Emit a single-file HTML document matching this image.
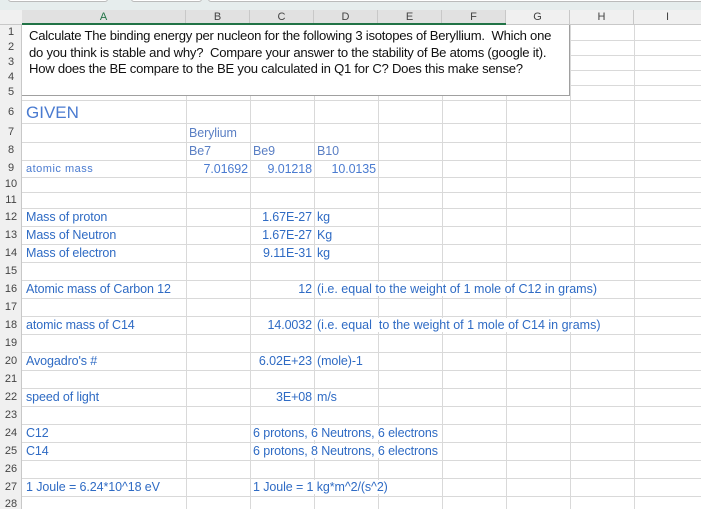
<!DOCTYPE html>
<html><head><meta charset="utf-8"><style>
*{margin:0;padding:0;box-sizing:border-box}
body{width:701px;height:509px;overflow:hidden;background:#fff;position:relative;font-family:"Liberation Sans",sans-serif}
.a{position:absolute;white-space:nowrap}
.t{color:#2f6bc4;font-size:12.5px;letter-spacing:-0.1px;z-index:5}
.w{background:#fff;padding-right:2px;z-index:6}
.hl{position:absolute;left:22px;right:0;height:1px;background:#d9d9d9;z-index:1}
.vl{position:absolute;top:25px;bottom:0;width:1px;background:#d9d9d9;z-index:1}
.rn{position:absolute;left:0;width:22px;text-align:center;font-size:11px;color:#444;z-index:3}
.ch{position:absolute;top:10px;height:15px;font-size:11px;color:#444;text-align:center;line-height:15px;border-right:1px solid #c8c8c8;z-index:3}
.r{text-align:right}
</style></head><body>
<div class="a" style="left:0;top:0;width:701px;height:10px;background:#e6eded"></div>
<div class="a" style="left:8px;top:-6px;width:100px;height:8px;background:#fff;border:1px solid #bbb;border-radius:3px"></div>
<div class="a" style="left:131px;top:-6px;width:71px;height:8px;background:#fff;border:1px solid #bbb;border-radius:3px"></div>
<div class="a" style="left:208px;top:-6px;width:500px;height:8px;background:#fff;border:1px solid #bbb;border-radius:3px"></div>
<div class="a" style="left:0;top:10px;width:701px;height:15px;background:#f0f0f0;border-bottom:1px solid #c8c8c8;z-index:2"></div>
<div class="a" style="left:0;top:25px;width:22px;height:484px;background:#f0f0f0;border-right:1px solid #c8c8c8;z-index:2"></div>
<div class="ch" style="left:22px;width:164px;background:#e1e1e1;color:#217346">A</div>
<div class="ch" style="left:186px;width:64px;background:#e1e1e1">B</div>
<div class="ch" style="left:250px;width:64px;background:#e1e1e1">C</div>
<div class="ch" style="left:314px;width:64px;background:#e1e1e1">D</div>
<div class="ch" style="left:378px;width:64px;background:#e1e1e1">E</div>
<div class="ch" style="left:442px;width:64px;background:#e1e1e1">F</div>
<div class="ch" style="left:506px;width:64px">G</div>
<div class="ch" style="left:570px;width:64px">H</div>
<div class="ch" style="left:634px;width:67px;border-right:none">I</div>
<div class="a" style="left:22px;top:23px;width:484px;height:2px;background:#217346;z-index:4"></div>
<!-- grid -->
<div class="vl" style="left:186px"></div><div class="vl" style="left:250px"></div><div class="vl" style="left:314px"></div><div class="vl" style="left:378px"></div><div class="vl" style="left:442px"></div><div class="vl" style="left:506px"></div><div class="vl" style="left:570px"></div><div class="vl" style="left:634px"></div>
<div class="hl" style="top:40px"></div><div class="hl" style="top:55px"></div><div class="hl" style="top:70px"></div><div class="hl" style="top:85px"></div><div class="hl" style="top:100px"></div>
<div class="hl" style="top:123px"></div><div class="hl" style="top:142px"></div><div class="hl" style="top:160px"></div><div class="hl" style="top:177px"></div><div class="hl" style="top:192px"></div><div class="hl" style="top:208px"></div>
<div class="hl" style="top:226px"></div><div class="hl" style="top:244px"></div><div class="hl" style="top:262px"></div><div class="hl" style="top:280px"></div><div class="hl" style="top:298px"></div><div class="hl" style="top:316px"></div><div class="hl" style="top:334px"></div><div class="hl" style="top:352px"></div><div class="hl" style="top:370px"></div><div class="hl" style="top:388px"></div><div class="hl" style="top:406px"></div><div class="hl" style="top:424px"></div><div class="hl" style="top:442px"></div><div class="hl" style="top:460px"></div><div class="hl" style="top:478px"></div><div class="hl" style="top:496px"></div>
<!-- row numbers -->
<div class="rn" style="top:26px">1</div><div class="rn" style="top:41px">2</div><div class="rn" style="top:56px">3</div><div class="rn" style="top:71px">4</div><div class="rn" style="top:86px">5</div>
<div class="rn" style="top:106px">6</div><div class="rn" style="top:126px">7</div><div class="rn" style="top:144px">8</div><div class="rn" style="top:162px">9</div><div class="rn" style="top:178px">10</div><div class="rn" style="top:194px">11</div>
<div class="rn" style="top:211px">12</div><div class="rn" style="top:229px">13</div><div class="rn" style="top:247px">14</div><div class="rn" style="top:265px">15</div><div class="rn" style="top:283px">16</div><div class="rn" style="top:301px">17</div><div class="rn" style="top:319px">18</div><div class="rn" style="top:337px">19</div><div class="rn" style="top:355px">20</div><div class="rn" style="top:373px">21</div><div class="rn" style="top:391px">22</div><div class="rn" style="top:409px">23</div><div class="rn" style="top:427px">24</div><div class="rn" style="top:445px">25</div><div class="rn" style="top:463px">26</div><div class="rn" style="top:481px">27</div><div class="rn" style="top:498px">28</div>
<!-- text box -->
<div class="a" style="left:22px;top:25px;width:548px;height:71px;background:#fff;border-right:1px solid #a0a0a0;border-bottom:1px solid #a0a0a0;z-index:7"></div>
<div class="a" style="left:29px;top:28px;font-size:13.1px;line-height:16.7px;color:#111;letter-spacing:-0.25px;z-index:8">Calculate The binding energy per nucleon for the following 3 isotopes of Beryllium.&nbsp; Which one<br>do you think is stable and why?&nbsp; Compare your answer to the stability of Be atoms (google it).<br>How does the BE compare to the BE you calculated in Q1 for C? Does this make sense?</div>
<!-- content -->
<div class="a" style="left:26px;top:103px;font-size:17px;color:#4a7bd0;z-index:5">GIVEN</div>
<div class="a t" style="left:189px;top:126px;color:#5a7fc4">Berylium</div>
<div class="a t" style="left:189px;top:144px;color:#5a7fc4">Be7</div>
<div class="a t" style="left:253px;top:144px;color:#5a7fc4">Be9</div>
<div class="a t" style="left:317px;top:144px;color:#5a7fc4">B10</div>
<div class="a" style="left:26px;top:163px;font-size:11px;letter-spacing:0.5px;color:#4a7bd0;z-index:5">atomic mass</div>
<div class="a t r" style="left:186px;width:62px;top:162px;color:#4a7bd0">7.01692</div>
<div class="a t r" style="left:250px;width:62px;top:162px;color:#4a7bd0">9.01218</div>
<div class="a t r" style="left:314px;width:62px;top:162px;color:#4a7bd0">10.0135</div>
<div class="a t" style="left:26px;top:210px">Mass of proton</div>
<div class="a t r" style="left:250px;width:62px;top:210px">1.67E-27</div><div class="a t" style="left:317px;top:210px">kg</div>
<div class="a t" style="left:26px;top:228px">Mass of Neutron</div>
<div class="a t r" style="left:250px;width:62px;top:228px">1.67E-27</div><div class="a t" style="left:317px;top:228px">Kg</div>
<div class="a t" style="left:26px;top:246px">Mass of electron</div>
<div class="a t r" style="left:250px;width:62px;top:246px">9.11E-31</div><div class="a t" style="left:317px;top:246px">kg</div>
<div class="a t" style="left:26px;top:282px">Atomic mass of Carbon 12</div>
<div class="a t r" style="left:250px;width:62px;top:282px">12</div><div class="a t w" style="left:316px;top:282px;padding-left:1px;letter-spacing:0">(i.e. equal to the weight of 1 mole of C12 in grams)</div>
<div class="a t" style="left:26px;top:318px">atomic mass of C14</div>
<div class="a t r" style="left:250px;width:62px;top:318px">14.0032</div><div class="a t w" style="left:316px;top:318px;padding-left:1px;letter-spacing:0">(i.e. equal&nbsp; to the weight of 1 mole of C14 in grams)</div>
<div class="a t" style="left:26px;top:354px">Avogadro's #</div>
<div class="a t r" style="left:250px;width:62px;top:354px">6.02E+23</div><div class="a t" style="left:317px;top:354px">(mole)-1</div>
<div class="a t" style="left:26px;top:390px">speed of light</div>
<div class="a t r" style="left:250px;width:62px;top:390px">3E+08</div><div class="a t" style="left:317px;top:390px">m/s</div>
<div class="a t" style="left:26px;top:426px">C12</div>
<div class="a t w" style="left:251px;top:426px;padding-left:2px">6 protons, 6 Neutrons, 6 electrons</div>
<div class="a t" style="left:26px;top:444px">C14</div>
<div class="a t w" style="left:251px;top:444px;padding-left:2px">6 protons, 8 Neutrons, 6 electrons</div>
<div class="a t" style="left:26px;top:480px">1 Joule = 6.24*10^18 eV</div>
<div class="a t w" style="left:251px;top:480px;padding-left:2px">1 Joule = 1 kg*m^2/(s^2)</div>
</body></html>
